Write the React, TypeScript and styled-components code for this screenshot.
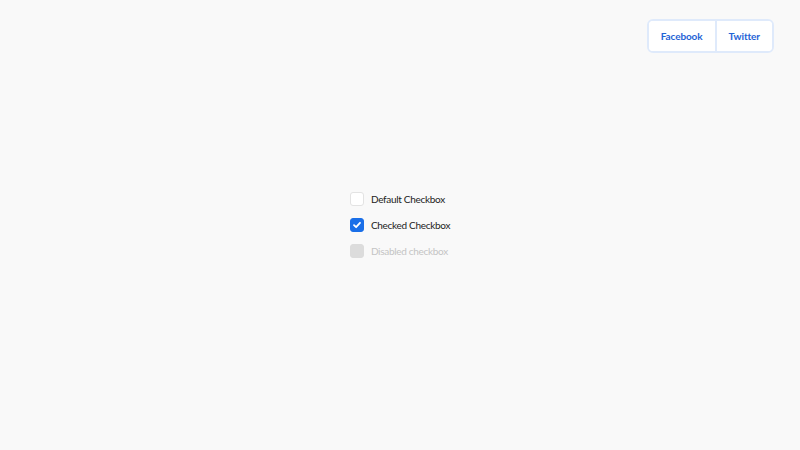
import React from 'react';
import styled, { createGlobalStyle } from 'styled-components';

const GlobalStyle = createGlobalStyle`
  html, body {
    margin: 0;
    padding: 0;
    background: #f9f9f9;
    font-family: Lato, 'Noto Sans', sans-serif;
  }
`;

export default function App(): JSX.Element {
  return (
    <>
      <GlobalStyle />
      <Page>
        <TopBar>
          <ButtonGroup>
            <GroupButton>Facebook</GroupButton>
            <GroupButton>Twitter</GroupButton>
          </ButtonGroup>
        </TopBar>
        <CheckList>
          <CheckRow>
            <Box />
            <Label>Default Checkbox</Label>
          </CheckRow>
          <CheckRow>
            <Box $checked>
              <svg width="10" height="10" viewBox="0 0 10 10">
                <path d="M2 5.2 L4.1 7.2 L8 2.8" fill="none" stroke="#fff" strokeWidth="1.8" strokeLinecap="round" strokeLinejoin="round" />
              </svg>
            </Box>
            <Label>Checked Checkbox</Label>
          </CheckRow>
          <CheckRow>
            <Box $disabled />
            <Label $disabled>Disabled checkbox</Label>
          </CheckRow>
        </CheckList>
      </Page>
    </>
  );
}

const Page = styled.div`
  position: relative;
  width: 800px;
  height: 450px;
  overflow: hidden;
  display: flex;
  justify-content: center;
  align-items: center;
`;

const TopBar = styled.div`
  position: absolute;
  top: 19px;
  right: 26px;
`;

const ButtonGroup = styled.div`
  display: flex;
  border: 2px solid #dfeafb;
  border-radius: 6px;
  background: #fff;
  overflow: hidden;
`;

const GroupButton = styled.button`
  height: 30px;
  padding: 0 12px;
  border: none;
  background: #fff;
  color: #1e63d6;
  font-family: Lato, sans-serif;
  font-weight: 700;
  font-size: 10px;
  letter-spacing: -0.1px;
  cursor: pointer;

  & + & {
    border-left: 2px solid #dfeafb;
  }
`;

const CheckList = styled.div`
  display: flex;
  flex-direction: column;
  gap: 12px;
  margin-top: -1px;
`;

const CheckRow = styled.label`
  display: flex;
  align-items: center;
  gap: 7px;
  height: 14px;
`;

const Box = styled.span<{ $checked?: boolean; $disabled?: boolean }>`
  width: 14px;
  height: 14px;
  box-sizing: border-box;
  border-radius: 3px;
  display: flex;
  align-items: center;
  justify-content: center;
  background: ${(p) => (p.$checked ? '#1a6fe8' : p.$disabled ? '#dcdcdc' : '#fff')};
  border: 1px solid ${(p) => (p.$checked ? '#1a6fe8' : p.$disabled ? '#dcdcdc' : '#e3e3e3')};
`;

const Label = styled.span<{ $disabled?: boolean }>`
  font-size: 10px;
  letter-spacing: -0.3px;
  color: ${(p) => (p.$disabled ? '#c4c4c4' : '#222')};
`;
